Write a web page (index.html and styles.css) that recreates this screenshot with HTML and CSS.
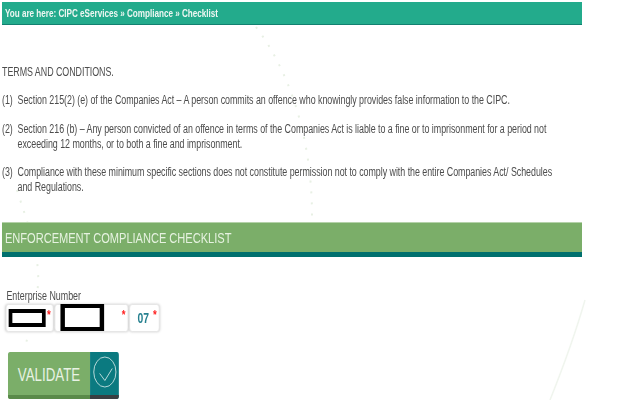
FILE: index.html
```html
<!DOCTYPE html>
<html lang="en">
<head>
<meta charset="utf-8">
<title>Checklist</title>
<link rel="stylesheet" href="styles.css">
</head>
<body>
<div class="viewport">
<svg class="backdrop" width="640" height="400" viewBox="0 0 640 400" aria-hidden="true">
  <path class="dots" d="M256 27C285 65 312 130 312 216"/>
  <path class="dots" d="M17 190C28 225 40 255 38 285C36 310 30 325 25 348"/>
  <path class="arc" d="M585 300C575 335 562 370 550 400"/>
</svg>
<main class="page">
  <div class="crumbs">You are here: CIPC eServices » Compliance » Checklist</div>
  <section class="terms">
    <p class="terms-title">TERMS AND CONDITIONS.</p>
    <ol class="clauses">
      <li><span class="num">(1)</span><span>Section 215(2) (e) of the Companies Act – A person commits an offence who knowingly provides false information to the CIPC.</span></li>
      <li><span class="num">(2)</span><span>Section 216 (b) – Any person convicted of an offence in terms of the Companies Act is liable to a fine or to imprisonment for a period not exceeding 12 months, or to both a fine and imprisonment.</span></li>
      <li><span class="num">(3)</span><span>Compliance with these minimum specific sections does not constitute permission not to comply with the entire Companies Act/ Schedules and Regulations.</span></li>
    </ol>
  </section>
  <h1 class="banner">ENFORCEMENT COMPLIANCE CHECKLIST</h1>
  <form class="enterprise">
    <div class="field-label">Enterprise Number</div>
    <div class="fields">
      <div class="field f1"><span class="mask m1"></span><span class="req">*</span></div>
      <div class="field f2"><span class="mask m2"></span><span class="req">*</span></div>
      <div class="field f3"><span class="val">07</span><span class="req">*</span></div>
    </div>
    <button class="validate" type="button">
      <span class="validate-text">VALIDATE</span>
      <span class="validate-icon">
        <svg width="34" height="32" viewBox="0 0 34 32"><circle cx="17" cy="16" r="15"/><path d="M10 17.5L17 24.5L27 12.5"/></svg>
      </span>
    </button>
  </form>
</main>
</div>
</body>
</html>
```
FILE: styles.css
```css
html, body {
  margin: 0;
  height: 400px;
  overflow: hidden;
  background: #fff;
}
body {
  font-family: "Liberation Sans", Arial, sans-serif;
  color: #4c4c4c;
}
.viewport {
  position: relative;
  width: 640px;
  height: 400px;
  overflow: hidden;
}
.backdrop {
  position: absolute;
  left: 0;
  top: 0;
  fill: none;
}
.dots {
  stroke: #e8f0e4;
  stroke-width: 2;
  stroke-dasharray: 2 9;
}
.arc {
  stroke: #f0f5ee;
  stroke-width: 1.5;
}
/* The whole sheet is drawn narrow: 784px of layout squeezed to 580px. */
.page {
  position: relative;
  width: 784px;
  margin-left: 2px;
  padding-top: 2px;
  transform: scaleX(0.74);
  transform-origin: left top;
  filter: blur(0.35px);
}
.crumbs {
  height: 22px;
  line-height: 23px;
  padding-left: 4px;
  background: #23ab8c;
  border-bottom: 1px solid #128070;
  color: #eef6f2;
  font-size: 11px;
  font-weight: bold;
  letter-spacing: -0.02px;
}
.terms {
  padding-top: 40px;
  font-size: 12px;
  line-height: 15px;
  letter-spacing: -0.045px;
}
.terms-title {
  margin: 0 0 13px;
}
.clauses {
  list-style: none;
  margin: 0;
  padding: 0;
}
.clauses li {
  display: flex;
  margin-bottom: 13.5px;
  padding-right: 30px;
}
.num {
  flex: none;
  width: 21px;
}
.banner {
  margin: 26.5px 0 0;
  height: 29px;
  line-height: 29px;
  padding-left: 4px;
  background: #7bae69;
  border-top: 1px solid #b5d2aa;
  border-bottom: 5px solid #00706e;
  color: #e6f2e0;
  font-size: 15px;
  font-weight: normal;
  letter-spacing: -0.04px;
}
.enterprise {
  padding: 32px 0 0 5px;
}
.field-label {
  font-size: 12px;
  line-height: 14px;
  margin-left: 1px;
}
.fields {
  display: flex;
  gap: 1px;
  margin-top: 1px;
}
.field {
  position: relative;
  height: 28px;
  display: flex;
  align-items: center;
  box-sizing: border-box;
  border: 1px solid #e6e6e6;
  border-radius: 4px;
  background: #fff;
  box-shadow: 0 0 3px #ccc;
}
.f1 { width: 65px; }
.f2 { width: 100px; }
.f3 { width: 41px; padding-left: 10px; }
.mask {
  display: block;
  box-sizing: border-box;
  background: #fff;
  border-style: solid;
  border-color: #000;
}
.m1 { width: 50px; height: 18px; margin-left: 3px; border-width: 4px 5px; }
.m2 { width: 59px; height: 27px; margin-left: 7px; border-width: 4px 6px; }
.val {
  color: #26808f;
  font-size: 14px;
  font-weight: bold;
}
.req {
  position: absolute;
  right: 3px;
  top: 3px;
  color: #f22;
  font-size: 13px;
  line-height: 13px;
  font-weight: bold;
}
.validate {
  display: flex;
  align-items: stretch;
  width: 150px;
  height: 47px;
  margin: 20px 0 0 3px;
  padding: 0;
  border: 0;
  border-radius: 3px;
  overflow: hidden;
  background: none;
  font-family: inherit;
}
.validate-text {
  flex: 1;
  background: #7bae69;
  border-bottom: 4px solid #5a8a4a;
  color: #e8f2e4;
  font-size: 18px;
  line-height: 47px;
}
.validate-icon {
  width: 39px;
  display: flex;
  align-items: center;
  justify-content: center;
  padding-bottom: 2px;
  background: #0b7a80;
  border-bottom: 4px solid #3a3f42;
  box-sizing: content-box;
}
.validate-icon svg {
  fill: none;
  stroke: #cfe6e4;
  stroke-width: 1;
}
```
